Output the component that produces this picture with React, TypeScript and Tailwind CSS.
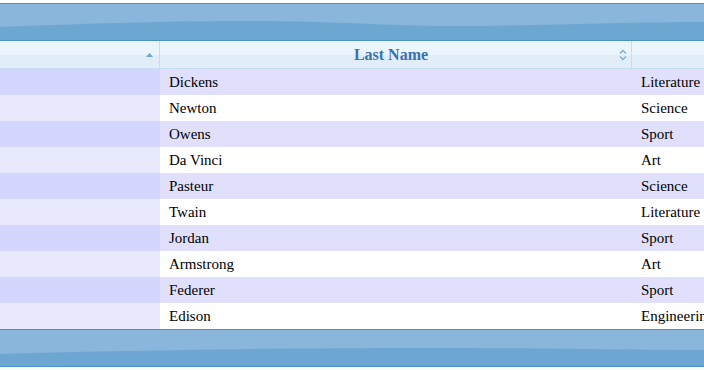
import React from "react";

const rows = [
  ["Dickens", "Literature"],
  ["Newton", "Science"],
  ["Owens", "Sport"],
  ["Da Vinci", "Art"],
  ["Pasteur", "Science"],
  ["Twain", "Literature"],
  ["Jordan", "Sport"],
  ["Armstrong", "Art"],
  ["Federer", "Sport"],
  ["Edison", "Engineering"],
];

function Bar({ top }: { top: boolean }) {
  return (
    <div className="border-y border-[#4a90d4] bg-[#89b6da] h-[38px]">
      <svg width="704" height="36" className="block">
        {top ? (
          <path
            d="M0 23 C 100 19, 180 17, 251 17 C 330 17, 390 22, 449 22 C 540 22, 620 18, 704 18 L704 36 L0 36 Z"
            fill="#6da6d1"
          />
        ) : (
          <path
            d="M0 24 C 150 20, 300 18, 420 18 C 550 18, 620 20, 704 20 L704 36 L0 36 Z"
            fill="#6da6d1"
          />
        )}
      </svg>
    </div>
  );
}

export default function App() {
  return (
    <div
      className="w-[704px] h-[370px] bg-white overflow-hidden"
      style={{ fontFamily: '"Liberation Serif", "Times New Roman", serif' }}
    >
      <div className="h-[3px]" />
      <Bar top />
      <div className="flex h-[28px] border-b border-[#c6dcef] bg-[linear-gradient(#ebf5fd_50%,#e1eefa_50%)]">
        <div className="w-[160px] shrink-0 border-r border-[#c6dcef] flex items-center justify-end pr-[6px]">
          <svg width="7" height="4" className="block">
            <path d="M0 4 L3.5 0 L7 4 Z" fill="#6ba4d4" />
          </svg>
        </div>
        <div className="w-[472px] shrink-0 border-r border-[#c6dcef] flex items-center">
          <div className="flex-1 text-center text-[16px] font-bold text-[#3b72ae] leading-none pl-[3px]">
            Last Name
          </div>
          <svg width="8" height="12" className="block mr-[4px]">
            <path d="M1 4.5 L4 1.5 L7 4.5 M1 7.5 L4 10.5 L7 7.5" stroke="#7aaedb" strokeWidth="1.3" fill="none" />
          </svg>
        </div>
        <div className="flex-1" />
      </div>
      <div>
        {rows.map(([name, field], i) => (
          <div key={name} className="flex h-[26px] text-[15px] leading-[26px] text-black">
            <div className={i % 2 === 0 ? "w-[160px] shrink-0 bg-[#d5d6fd]" : "w-[160px] shrink-0 bg-[#e9e9fe]"} />
            <div className={i % 2 === 0 ? "w-[472px] shrink-0 bg-[#e0e0fd] pl-[9px]" : "w-[472px] shrink-0 bg-white pl-[9px]"}>
              {name}
            </div>
            <div
              className={
                i % 2 === 0
                  ? "flex-1 bg-[#e0e0fd] pl-[9px] whitespace-nowrap overflow-hidden"
                  : "flex-1 bg-white pl-[9px] whitespace-nowrap overflow-hidden"
              }
            >
              {field}
            </div>
          </div>
        ))}
      </div>
      <Bar top={false} />
    </div>
  );
}
